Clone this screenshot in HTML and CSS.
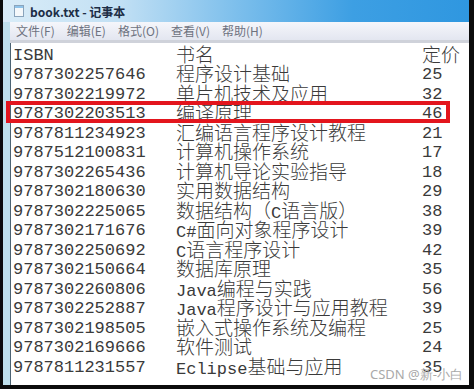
FILE: index.html
```html
<!DOCTYPE html>
<html>
<head>
    <meta charset="UTF-8">
    <title>book.txt - 记事本</title>
    <link rel="stylesheet" href="styles.css">
</head>
<body>
    <div class="window">
        <div class="titlebar">
            <svg class="app-icon" width="10" height="12" viewBox="0 0 10 12">
                <rect x="0.5" y="0.5" width="9" height="11" fill="#f4f8fb" stroke="#8aa4bc"/>
                <rect x="1" y="1" width="8" height="2" fill="#8fc3ea"/>
            </svg>
            <span class="title">book.txt - 记事本</span>
        </div>
        <div class="client">
            <ul class="menubar">
                <li>文件(F)</li>
                <li>编辑(E)</li>
                <li>格式(O)</li>
                <li>查看(V)</li>
                <li>帮助(H)</li>
            </ul>
            <div class="editor">
                <div class="row"><span class="isbn">ISBN</span><span class="name">书名</span><span class="price cjk">定价</span></div>
                <div class="row"><span class="isbn">9787302257646</span><span class="name">程序设计基础</span><span class="price">25</span></div>
                <div class="row"><span class="isbn">9787302219972</span><span class="name">单片机技术及应用</span><span class="price">32</span></div>
                <div class="row marked"><span class="isbn">9787302203513</span><span class="name">编译原理</span><span class="price">46</span></div>
                <div class="row"><span class="isbn">9787811234923</span><span class="name">汇编语言程序设计教程</span><span class="price">21</span></div>
                <div class="row"><span class="isbn">9787512100831</span><span class="name">计算机操作系统</span><span class="price">17</span></div>
                <div class="row"><span class="isbn">9787302265436</span><span class="name">计算机导论实验指导</span><span class="price">18</span></div>
                <div class="row"><span class="isbn">9787302180630</span><span class="name">实用数据结构</span><span class="price">29</span></div>
                <div class="row"><span class="isbn">9787302225065</span><span class="name">数据结构（<span class="en">C</span>语言版）</span><span class="price">38</span></div>
                <div class="row"><span class="isbn">9787302171676</span><span class="name"><span class="en">C#</span>面向对象程序设计</span><span class="price">39</span></div>
                <div class="row"><span class="isbn">9787302250692</span><span class="name"><span class="en">C</span>语言程序设计</span><span class="price">42</span></div>
                <div class="row"><span class="isbn">9787302150664</span><span class="name">数据库原理</span><span class="price">35</span></div>
                <div class="row"><span class="isbn">9787302260806</span><span class="name"><span class="en">Java</span>编程与实践</span><span class="price">56</span></div>
                <div class="row"><span class="isbn">9787302252887</span><span class="name"><span class="en">Java</span>程序设计与应用教程</span><span class="price">39</span></div>
                <div class="row"><span class="isbn">9787302198505</span><span class="name">嵌入式操作系统及编程</span><span class="price">25</span></div>
                <div class="row"><span class="isbn">9787302169666</span><span class="name">软件测试</span><span class="price">24</span></div>
                <div class="row"><span class="isbn">9787811231557</span><span class="name"><span class="en">Eclipse</span>基础与应用</span><span class="price">35</span></div>
            </div>
        </div>
    </div>
    <div class="watermark">CSDN @新-小白</div>
</body>
</html>
```

FILE: styles.css
```css
* {
    margin: 0;
    padding: 0;
    list-style: none;
    box-sizing: border-box;
}

body {
    width: 474px;
    height: 389px;
    overflow: hidden;
    position: relative;
    background-color: #0c0c0c;
}

.window {
    margin-left: 3px;
    width: 466px;
    height: 385px;
    display: flex;
    flex-direction: column;
    background-color: #bfe0ec;
}

.titlebar {
    height: 22px;
    display: flex;
    align-items: center;
    gap: 6px;
    padding-left: 11px;
    background: linear-gradient(90deg, #d9ecf8 0%, #c2e0f4 25%, #7dbfec 50%, #3d9fe3 75%, #2f97e0 100%);
}

.title {
    font: bold 12px "Noto Sans CJK SC", sans-serif;
    color: #1c2d45;
}

.client {
    flex: 1;
    display: flex;
    flex-direction: column;
    padding-left: 7px;
}

.menubar {
    height: 21px;
    display: flex;
    align-items: center;
    gap: 12px;
    padding-left: 6px;
    padding-bottom: 1px;
    border-bottom: 3px solid #cfd2da;
    background: linear-gradient(#f5f6fb, #e3e6f0);
    font: 12px "Noto Sans CJK SC", sans-serif;
    color: #6e7280;
}

.editor {
    flex: 1;
    padding-top: 2.5px;
    padding-left: 2px;
    border-left: 1px solid #4b6272;
    background-color: #fff;
    color: #3a3a3a;
}

.row {
    height: 19.5px;
    line-height: 19.5px;
    display: grid;
    grid-template-columns: 163px 246px 1fr;
    white-space: nowrap;
}

.isbn,
.price,
.en {
    font-family: "Liberation Mono", monospace;
    font-size: 17px;
}

.name,
.cjk {
    font-family: "Noto Sans CJK SC", sans-serif;
    font-size: 19px;
    font-weight: 300;
    margin-top: -2px;
}

.marked {
    position: relative;
}

.marked::after {
    content: "";
    position: absolute;
    left: -7px;
    right: 19px;
    top: -3px;
    bottom: 1px;
    border: 4px solid #e3151d;
}

.watermark {
    position: absolute;
    right: 11px;
    bottom: 5px;
    font: 13px "Noto Sans", sans-serif;
    color: #a9a9a9;
}
```
